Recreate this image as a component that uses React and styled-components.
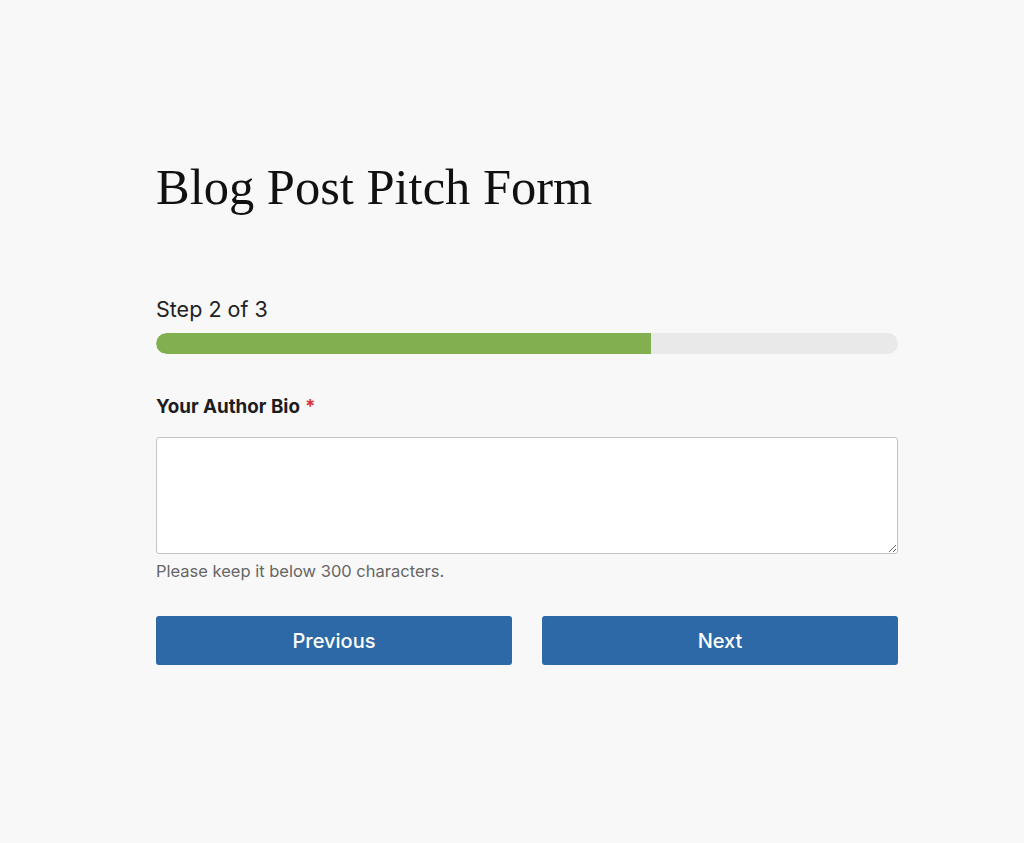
import styled, { createGlobalStyle } from "styled-components";

const GlobalStyle = createGlobalStyle`
  html, body {
    margin: 0;
    padding: 0;
    background: #f8f8f8;
  }
  body {
    font-family: Inter, "Liberation Sans", sans-serif;
    color: #222;
  }
`;

const Page = styled.div`
  min-height: 843px;
  padding: 157px 126px 0 156px;
  box-sizing: border-box;
`;

const Title = styled.h1`
  margin: 0;
  font-family: "Liberation Serif", "DejaVu Serif", serif;
  font-weight: 400;
  font-size: 50.5px;
  line-height: 60px;
  color: #111;
`;

const StepText = styled.div`
  margin-top: 79px;
  font-size: 21.5px;
  line-height: 26px;
  color: #222;
`;

const Track = styled.div`
  margin-top: 11px;
  height: 21px;
  border-radius: 11px;
  background: #e9e9e9;
  overflow: hidden;
`;

const Fill = styled.div`
  height: 100%;
  background: #82b04e;
  border-radius: 11px 0 0 11px;
`;

const Label = styled.label`
  display: block;
  margin-top: 41px;
  font-size: 18.8px;
  font-weight: 700;
  line-height: 24px;
  color: #1d1d1d;
`;

const Required = styled.span`
  color: #d63637;
  margin-left: 5px;
`;

const Bio = styled.textarea`
  display: block;
  margin-top: 18px;
  width: 100%;
  height: 117px;
  box-sizing: border-box;
  border: 1px solid #c4c4c4;
  border-radius: 3px;
  background: #fff;
  resize: vertical;
  font-family: inherit;
  font-size: 16px;
`;

const Hint = styled.div`
  margin-top: 6px;
  font-size: 16.5px;
  line-height: 22px;
  color: #666;
`;

const Buttons = styled.div`
  display: grid;
  grid-template-columns: 1fr 1fr;
  gap: 30px;
  margin-top: 34px;
`;

const Button = styled.button`
  height: 49px;
  border: none;
  border-radius: 3px;
  background: #2d69a6;
  color: #fff;
  font-family: inherit;
  font-size: 20px;
  font-weight: 500;
  cursor: pointer;
`;

export default function App() {
  const step = 2;
  const total = 3;
  return (
    <>
      <GlobalStyle />
      <Page>
        <Title>Blog Post Pitch Form</Title>
        <StepText>
          Step {step} of {total}
        </StepText>
        <Track>
          <Fill style={{ width: `${(step / total) * 100}%` }} />
        </Track>
        <Label htmlFor="bio">
          Your Author Bio<Required>*</Required>
        </Label>
        <Bio id="bio" />
        <Hint>Please keep it below 300 characters.</Hint>
        <Buttons>
          <Button>Previous</Button>
          <Button>Next</Button>
        </Buttons>
      </Page>
    </>
  );
}
